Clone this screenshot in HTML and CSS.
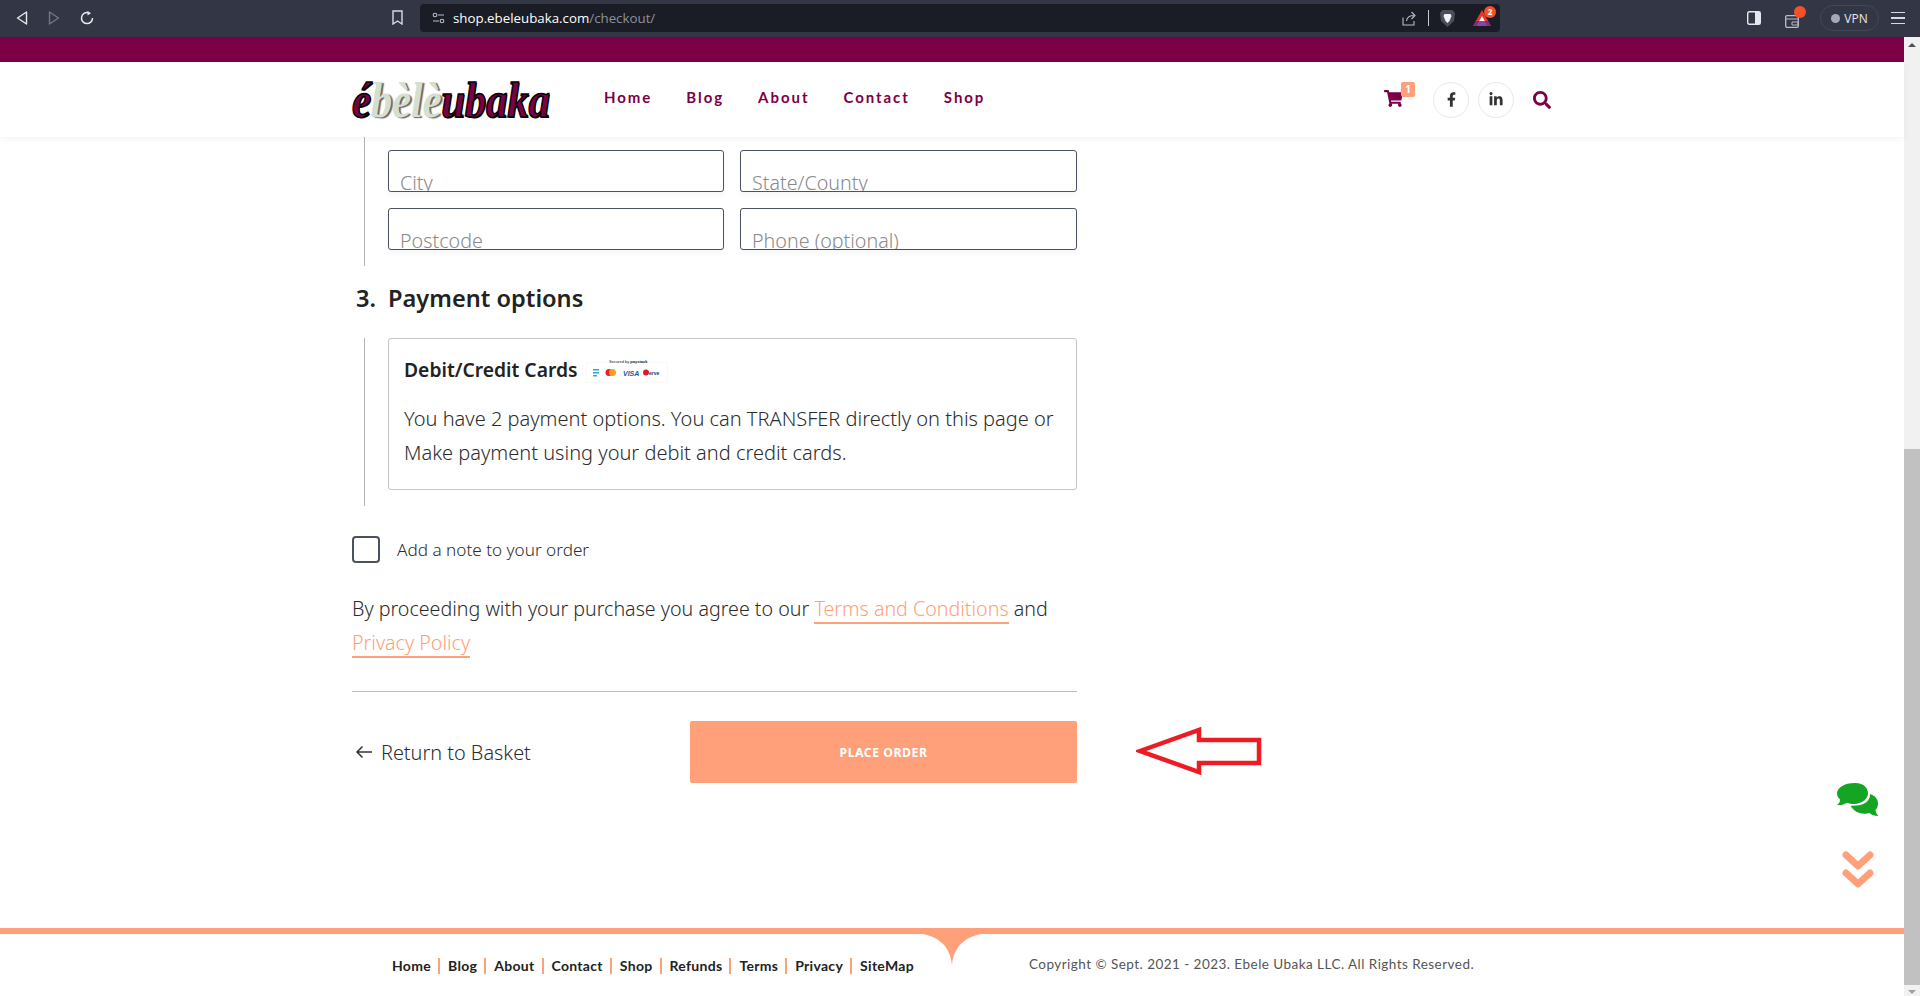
FILE: index.html
```html
<!DOCTYPE html>
<html lang="en">
<head>
    <meta charset="UTF-8">
    <meta name="viewport" content="width=device-width, initial-scale=1.0">
    <title>Checkout - Ebele Ubaka</title>
    <link rel="stylesheet" href="styles.css">
</head>
<body>
    <!-- browser chrome -->
    <div class="browser-bar">
        <div class="nav-buttons">
            <svg class="chrome-icon" width="12" height="14" viewBox="0 0 12 14"><path d="M10.5 1 1.5 7l9 6z" fill="none" stroke="#e6e8ee" stroke-width="1.4" stroke-linejoin="round"/></svg>
            <svg class="chrome-icon dim" width="12" height="14" viewBox="0 0 12 14"><path d="M1.5 1l9 6-9 6z" fill="none" stroke="#737785" stroke-width="1.4" stroke-linejoin="round"/></svg>
            <svg class="chrome-icon" width="14" height="14" viewBox="0 0 14 14"><path d="M8.5 1.8A5.5 5.5 0 1 0 12.5 7" fill="none" stroke="#e6e8ee" stroke-width="1.5"/><path d="M7.5 0v4.4L11 2.2z" fill="#e6e8ee"/></svg>
        </div>
        <svg class="bookmark" width="11" height="15" viewBox="0 0 11 15"><path d="M1 1h9v13L5.500 11 1 14z" fill="none" stroke="#d8dae2" stroke-width="1.4"/></svg>
        <div class="url-bar">
            <svg width="13" height="12" viewBox="0 0 13 12"><g fill="none" stroke="#b9bcc6" stroke-width="1.100"><circle cx="3" cy="3" r="1.800"/><path d="M6 3h6M1 9h6"/><circle cx="10" cy="9" r="1.800"/></g></svg>
            <span class="url-text"><span class="url-host">shop.ebeleubaka.com</span>/checkout/</span>
            <svg class="share" width="15" height="15" viewBox="0 0 15 15"><path d="M1 6.500V14h11V10M4.500 10C5 6.500 8 4.500 12 4.500M9.500 1l3.500 3.500L9.500 8" fill="none" stroke="#b9bcc6" stroke-width="1.100"/></svg>
            <span class="url-sep"></span>
            <svg class="shield" width="15" height="18" viewBox="0 0 15 18"><path d="M2.500 1h10L15 4l-1 8-6.500 6L1 12 0 4z" fill="#4c4f5b"/><path d="M4.500 5h6l1 2-2 5-2 2-2-2-2-5z" fill="#f2f3f6"/></svg>
            <span class="rewards">
                <svg width="18" height="16" viewBox="0 0 18 16"><path d="M9 0l9 16H0z" fill="#e8382c"/><path d="M3.500 16L9 6l5.500 10z" fill="#fff"/><path d="M0 16l3-5h12l3 5z" fill="#6a2a91" opacity=".85"/></svg>
                <span class="rewards-count">2</span>
            </span>
        </div>
        <svg class="sidebar-icon" width="14" height="14" viewBox="0 0 14 14"><rect x=".7" y=".7" width="12.600" height="12.600" rx="1.500" fill="none" stroke="#e6e8ee" stroke-width="1.400"/><rect x="8" y="1" width="5" height="12" fill="#e6e8ee"/></svg>
        <span class="wallet">
            <svg width="14" height="14" viewBox="0 0 14 14"><rect x=".7" y="1.700" width="12.600" height="11.600" rx="1.200" fill="none" stroke="#b9bcc6" stroke-width="1.300"/><path d="M1 5h12M7 8h6v3H7z" fill="none" stroke="#b9bcc6"/></svg>
            <span class="wallet-dot"></span>
        </span>
        <span class="vpn"><span class="vpn-dot"></span>VPN</span>
        <span class="menu-icon"><i></i><i></i><i></i></span>
    </div>

    <div class="window">
        <div class="page">
            <div class="top-band"></div>
            <header class="site-header">
                <div class="container header-row">
                    <a class="logo"><span class="logo-dark">é</span><span class="logo-pale">bèlè</span><span class="logo-dark">ubaka</span></a>
                    <nav class="main-nav">
                        <a>Home</a>
                        <a>Blog</a>
                        <a>About</a>
                        <a>Contact</a>
                        <a>Shop</a>
                    </nav>
                    <div class="header-icons">
                        <span class="cart">
                            <svg width="19" height="17" viewBox="0 0 576 512"><path fill="#7b0046" d="M528.12 301.319l47.273-208C578.806 78.301 567.391 64 551.99 64H159.208l-9.166-44.81C147.758 8.021 137.93 0 126.529 0H24C10.745 0 0 10.745 0 24v16c0 13.255 10.745 24 24 24h69.883l70.248 343.435C147.325 417.1 136 435.222 136 456c0 30.928 25.072 56 56 56s56-25.072 56-56c0-15.674-6.447-29.835-16.824-40h209.647C430.447 426.165 424 440.326 424 456c0 30.928 25.072 56 56 56s56-25.072 56-56c0-22.172-12.888-41.332-31.579-50.405l5.517-24.276c3.413-15.018-8.002-29.319-23.403-29.319H218.117l-6.545-32h293.145c11.206 0 20.92-7.754 23.403-18.681z"/></svg>
                            <span class="cart-count">1</span>
                        </span>
                        <span class="social">
                            <svg width="9" height="15" viewBox="0 0 320 512"><path fill="#333" d="M279.14 288l14.22-92.66h-88.91v-60.13c0-25.35 12.42-50.06 52.24-50.06h40.42V6.26S260.43 0 225.36 0c-73.22 0-121.08 44.38-121.08 124.72v70.62H22.89V288h81.39v224h100.17V288z"/></svg>
                        </span>
                        <span class="social">
                            <svg width="14" height="15" viewBox="0 0 448 512"><path fill="#333" d="M100.28 448H7.4V148.9h92.88zM53.79 108.1C24.09 108.1 0 83.5 0 53.8a53.79 53.79 0 0 1 107.58 0c0 29.7-24.1 54.3-53.79 54.3zM447.9 448h-92.68V302.4c0-34.7-.7-79.2-48.29-79.2-48.29 0-55.69 37.7-55.69 76.7V448h-92.78V148.9h89.08v40.8h1.3c12.4-23.5 42.69-48.3 87.88-48.3 94 0 111.28 61.9 111.28 142.3V448z"/></svg>
                        </span>
                        <svg class="search" width="18" height="18" viewBox="0 0 512 512"><path fill="#7b0046" d="M505 442.7L405.3 343c-4.5-4.5-10.6-7-17-7H372c27.6-35.3 44-79.7 44-128C416 93.1 322.9 0 208 0S0 93.1 0 208s93.1 208 208 208c48.3 0 92.7-16.4 128-44v16.3c0 6.4 2.5 12.5 7 17l99.7 99.7c9.4 9.4 24.6 9.4 33.9 0l28.3-28.3c9.4-9.4 9.4-24.6.1-34zM208 336c-70.7 0-128-57.2-128-128 0-70.7 57.2-128 128-128 70.7 0 128 57.2 128 128 0 70.7-57.2 128-128 128z"/></svg>
                    </div>
                </div>
            </header>

            <main class="content">
                <div class="container">
                    <div class="checkout">
                        <div class="step-body address-fields">
                            <input class="field" type="text" placeholder="City">
                            <input class="field" type="text" placeholder="State/County">
                            <input class="field" type="text" placeholder="Postcode">
                            <input class="field" type="text" placeholder="Phone (optional)">
                        </div>

                        <h2 class="step-title"><span class="step-number">3.</span>Payment options</h2>

                        <div class="step-body payment-step">
                            <div class="payment-card">
                                <div class="payment-head">
                                    <strong>Debit/Credit Cards</strong>
                                    <svg class="card-logos" width="82" height="24" viewBox="0 0 82 24">
                                        <rect x=".5" y="3.500" width="81" height="20" fill="#fff" stroke="#f9f9f9"/>
                                        <text x="23" y="4" font-size="4" font-family="Liberation Sans, sans-serif" fill="#222">Secured by <tspan font-weight="bold">paystack</tspan></text>
                                        <path d="M7 10h6v1.500H7zM7 13h6v1.500H7zM7 16h4v1.500H7z" fill="#29a8e0"/>
                                        <circle cx="23" cy="13.500" r="3.500" fill="#e3202c"/>
                                        <circle cx="26.500" cy="13.500" r="3.500" fill="#f6a01c"/>
                                        <text x="37" y="16.500" font-size="7" font-weight="bold" font-style="italic" font-family="Liberation Sans, sans-serif" fill="#1f4f9c">VISA</text>
                                        <circle cx="60" cy="13.500" r="3" fill="#d3202c"/>
                                        <text x="63" y="15.500" font-size="5" font-weight="bold" font-family="Liberation Sans, sans-serif" fill="#2a3a6a">erve</text>
                                    </svg>
                                </div>
                                <p>You have 2 payment options. You can TRANSFER directly on this page or Make payment using your debit and credit cards.</p>
                            </div>
                        </div>

                        <label class="order-note">
                            <span class="checkbox"></span>
                            Add a note to your order
                        </label>

                        <p class="terms">By proceeding with your purchase you agree to our <a>Terms and Conditions</a> and <a>Privacy Policy</a></p>

                        <hr class="divider">

                        <div class="order-actions">
                            <a class="return-link">
                                <svg width="18" height="14" viewBox="0 0 18 14"><path d="M17 7H2M7.500 1.500 2 7l5.500 5.500" fill="none" stroke="#333" stroke-width="1.500"/></svg>
                                Return to Basket
                            </a>
                            <button class="place-order">PLACE ORDER</button>
                        </div>
                    </div>
                </div>
                <svg class="red-arrow" width="126" height="50" viewBox="0 0 126 50"><path d="M4 25 63 4v10h60v23H63v9z" fill="#fff" stroke="#ed1c24" stroke-width="4.500"/></svg>
            </main>

            <footer class="site-footer">
                <svg class="footer-notch" width="58" height="31" viewBox="0 0 58 31"><path d="M0 0h58C48 2 31 8 29 31 27 8 10 2 0 0z" fill="#ffa07a"/></svg>
                <nav class="footer-nav">
                    <a>Home</a>
                    <a>Blog</a>
                    <a>About</a>
                    <a>Contact</a>
                    <a>Shop</a>
                    <a>Refunds</a>
                    <a>Terms</a>
                    <a>Privacy</a>
                    <a>SiteMap</a>
                </nav>
                <p class="copyright">Copyright © Sept. 2021 - 2023. Ebele Ubaka LLC. All Rights Reserved.</p>
            </footer>

            <!-- floating buttons -->
            <svg class="chat-button" width="42" height="34" viewBox="0 0 42 34">
                <path fill="#13a523" d="M18 0c9.500 0 13 5.500 13 10.500S25 21 17 21c-3 0-5-.5-7-1.300C8 21 5 22.500 0 22c2-1.500 3-3 3-5.500C1 14.500 0 12.500 0 10.500 0 5 7 0 18 0z"/>
                <path fill="#13a523" d="M33 11c5 1.500 8 5 8 9.500 0 3-1 5-2.500 6.500 0 2 1 4 3 6-4 0-7-1-9-3-1.500.5-3 .7-5 .7-6 0-11-3-14-8 9 .5 20-2 19.500-11.700z"/>
            </svg>
            <svg class="scroll-button" width="32" height="40" viewBox="0 0 32 40"><path d="M4 5 16 16 28 5M4 23 16 34 28 23" fill="none" stroke="#ffa07a" stroke-width="7" stroke-linecap="round" stroke-linejoin="round"/></svg>
        </div>

        <div class="scrollbar">
            <span class="scroll-arrow up"></span>
            <span class="scroll-thumb"></span>
            <span class="scroll-arrow down"></span>
        </div>
    </div>
</body>
</html>
```

FILE: styles.css
```css
* {
    box-sizing: border-box;
}
html, body {
    height: 100%;
}
body {
    margin: 0;
    overflow: hidden;
    font-family: "Noto Sans", Arial, sans-serif;
    font-weight: 300;
    color: #2c2c2c;
    background-color: #fff;
    display: flex;
    flex-direction: column;
}
p {
    margin: 0;
}

/* browser bar */
.browser-bar {
    height: 37px;
    flex: none;
    display: flex;
    align-items: center;
    background-color: #333745;
    padding: 0 0 1px 16px;
    color: #e6e8ee;
    font-weight: 400;
}
.nav-buttons {
    width: 376px;
    margin-bottom: 1px;
    display: flex;
    align-items: center;
}
.nav-buttons .chrome-icon {
    margin-right: 20px;
}
.bookmark {
    flex: none;
    margin-bottom: 1px;
}
.url-bar {
    width: 1080px;
    height: 28px;
    margin-left: 17px;
    padding: 0 4px 0 12px;
    border-radius: 4px;
    background-color: #1a1d26;
    display: flex;
    align-items: center;
}
.url-text {
    flex: 1;
    margin: 0 0 1px 8px;
    font-family: "Open Sans", sans-serif;
    font-size: 13.300px;
    color: #8e919c;
}
.url-host {
    color: #fff;
}
.url-sep {
    width: 1px;
    height: 16px;
    margin: 0 11px;
    background-color: #c8cad2;
}
.shield {
    margin-right: 18px;
}
.rewards {
    position: relative;
    width: 23px;
    height: 18px;
}
.rewards-count {
    position: absolute;
    right: 0;
    top: -3px;
    width: 12px;
    height: 12px;
    border-radius: 50%;
    background-color: #f4502a;
    color: #fff;
    font-size: 8px;
    font-weight: 700;
    line-height: 12px;
    text-align: center;
}
.sidebar-icon {
    margin-left: 247px;
}
.wallet {
    position: relative;
    margin-left: 24px;
    height: 14px;
}
.wallet-dot {
    position: absolute;
    left: 9px;
    top: -5px;
    width: 12px;
    height: 12px;
    border-radius: 50%;
    background-color: #f4502a;
}
.vpn {
    width: 59px;
    height: 26px;
    margin-left: 21px;
    border: 1px solid #434756;
    border-radius: 13px;
    display: flex;
    align-items: center;
    justify-content: center;
    font-family: "Open Sans", sans-serif;
    font-size: 12px;
}
.vpn-dot {
    width: 9px;
    height: 9px;
    margin-right: 4px;
    border-radius: 50%;
    background-color: #a4a8ba;
}
.menu-icon {
    margin-left: 12px;
    width: 14px;
    display: flex;
    flex-direction: column;
    gap: 4px;
}
.menu-icon i {
    height: 1.500px;
    background-color: #d8dae2;
}

/* page */
.window {
    flex: 1;
    display: flex;
    min-height: 0;
}
.page {
    position: relative;
    flex: 1;
    min-width: 0;
    display: flex;
    flex-direction: column;
}
.top-band {
    height: 25px;
    flex: none;
    background-color: #7b0046;
}
.container {
    width: 1200px;
    margin: 0 auto;
}

/* header */
.site-header {
    position: relative;
    z-index: 2;
    height: 75px;
    flex: none;
    background-color: #fff;
    box-shadow: 0 2px 8px rgba(0, 0, 0, .05);
}
.header-row {
    height: 100%;
    display: flex;
    align-items: center;
}
.logo {
    width: 200px;
    font-family: "Liberation Serif", serif;
    font-size: 43px;
    font-weight: 700;
    font-style: italic;
    line-height: 44px;
    letter-spacing: -.3px;
    white-space: nowrap;
    transform: scaleY(1.2);
    -webkit-text-stroke: 1.200px #000;
    text-shadow: 1px 1px 0 #000;
}
.logo-dark {
    color: #7b0046;
}
.logo-pale {
    color: #d4dfd2;
    -webkit-text-stroke: 0;
    text-shadow: 2px 1px 1px #666;
}
.main-nav {
    margin: 0 0 5px 52px;
    display: flex;
    gap: 34px;
    font-family: Lato, sans-serif;
    font-size: 15px;
    font-weight: 700;
    letter-spacing: 1.950px;
    color: #7b0046;
}
.header-icons {
    margin-left: auto;
    margin-right: 1px;
    display: flex;
    align-items: center;
}
.cart {
    position: relative;
    width: 49px;
    height: 36px;
    padding-top: 8px;
}
.cart-count {
    position: absolute;
    left: 17px;
    top: 0;
    width: 14px;
    height: 15px;
    border-radius: 2px;
    background-color: #ffa07a;
    color: #fff;
    font-size: 10px;
    font-weight: 700;
    line-height: 15px;
    text-align: center;
}
.social {
    width: 36px;
    height: 36px;
    margin-right: 9px;
    border: 1px solid #e8e8e8;
    border-radius: 50%;
    display: flex;
    align-items: center;
    justify-content: center;
}
.search {
    margin: 1px 0 0 10px;
}

/* checkout column */
.content {
    position: relative;
    flex: 1;
}
.checkout {
    width: 725px;
}
.step-body {
    margin-left: 12px;
    padding-left: 23px;
    border-left: 1px solid #b5b5b5;
}
.address-fields {
    width: 713px;
    padding-top: 13px;
    padding-bottom: 16px;
    display: grid;
    grid-template-columns: 336px 337px;
    gap: 16px;
}
.field {
    height: 42px;
    width: 100%;
    padding: 22px 10px 0 11px;
    border: 1px solid #4a5160;
    border-radius: 3px;
    background-color: #fff;
    font-family: inherit;
    font-size: 19.700px;
    font-weight: 300;
    box-shadow: 0 3px 6px rgba(0, 0, 0, .04);
}
.field::placeholder {
    color: #8a8a8a;
    opacity: 1;
}
.step-title {
    margin: 16px 0 23px 4px;
    height: 33px;
    font-size: 23.600px;
    font-weight: 600;
    line-height: 33px;
    color: #222;
}
.step-number {
    margin-right: 12px;
}
.payment-step {
    width: 713px;
    padding-bottom: 16px;
}
.payment-card {
    height: 152px;
    padding: 15px 15px 0;
    border: 1px solid #c4c4c4;
    border-radius: 3px;
}
.payment-head {
    height: 30px;
    display: flex;
    align-items: center;
    margin-bottom: 18px;
}
.payment-head strong {
    font-size: 19.300px;
    font-weight: 600;
    color: #222;
}
.card-logos {
    margin: 4px 0 0 8px;
}
.payment-card p {
    font-size: 20px;
    line-height: 34px;
}
.order-note {
    margin-top: 30px;
    height: 27px;
    display: flex;
    align-items: center;
    gap: 17px;
    font-size: 17.150px;
}
.checkbox {
    width: 28px;
    height: 27px;
    border: 2px solid #4a5160;
    border-radius: 4px;
}
.terms {
    margin-top: 29px;
    font-size: 19.650px;
    line-height: 34px;
}
.terms a {
    color: #ffa07a;
    border-bottom: 2px solid #ffa07a;
}
.divider {
    margin: 31px 0 0;
    border: 0;
    border-top: 1px solid #bdbdbd;
}
.order-actions {
    margin-top: 29px;
    display: flex;
    align-items: center;
    justify-content: space-between;
}
.return-link {
    padding-left: 3px;
    display: flex;
    align-items: center;
    gap: 8px;
    font-size: 19.850px;
}
.place-order {
    width: 387px;
    height: 62px;
    border: 0;
    border-radius: 2px;
    background-color: #ffa07a;
    color: #fff;
    font-family: inherit;
    font-size: 12.300px;
    font-weight: 700;
    letter-spacing: .5px;
    cursor: pointer;
}
.red-arrow {
    position: absolute;
    left: 1136px;
    top: 589px;
}

/* footer */
.site-footer {
    position: relative;
    height: 68px;
    flex: none;
    border-top: 6px solid #ffa07a;
}
.footer-notch {
    position: absolute;
    left: 923px;
    top: 0;
}
.footer-nav {
    position: absolute;
    left: 392px;
    top: 24px;
    display: flex;
    font-family: Lato, sans-serif;
    font-size: 14px;
    font-weight: 700;
    line-height: 16px;
    letter-spacing: .3px;
    color: #222;
}
.footer-nav a + a {
    margin-left: 7px;
    padding-left: 8px;
    border-left: 2px solid #ffa07a;
}
.copyright {
    position: absolute;
    left: 1029px;
    top: 21px;
    font-family: Lato, sans-serif;
    font-size: 13.500px;
    font-weight: 400;
    line-height: 18px;
    letter-spacing: .46px;
    color: #555;
}

/* floating buttons */
.chat-button {
    position: absolute;
    left: 1837px;
    top: 746px;
}
.scroll-button {
    position: absolute;
    left: 1842px;
    top: 813px;
}

/* scrollbar */
.scrollbar {
    width: 16px;
    flex: none;
    padding: 412px 0 0;
    background-color: #f1f1f1;
    display: flex;
    flex-direction: column;
    position: relative;
}
.scroll-thumb {
    height: 536px;
    background-color: #c1c1c1;
}
.scroll-arrow {
    position: absolute;
    left: 4px;
    width: 0;
    height: 0;
    border-left: 4px solid transparent;
    border-right: 4px solid transparent;
}
.scroll-arrow.up {
    top: 6px;
    border-bottom: 4px solid #505050;
}
.scroll-arrow.down {
    bottom: 2px;
    border-top: 4px solid #a0a0a0;
}
```
